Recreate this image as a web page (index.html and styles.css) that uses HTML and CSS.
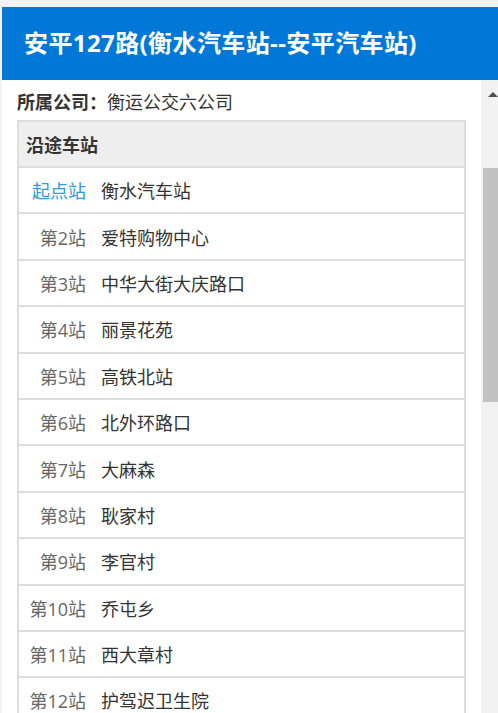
FILE: index.html
```html
<!DOCTYPE html>
<html lang="zh-CN">
<head>
<meta charset="utf-8">
<title>安平127路</title>
<link rel="stylesheet" href="styles.css">
</head>
<body>
<header class="topbar">
  <h1 class="title">安平127路(衡水汽车站--安平汽车站)</h1>
</header>
<div class="main">
  <div class="panel">
    <p class="company"><b class="company-label">所属公司：</b>衡运公交六公司</p>
    <div class="stations">
      <div class="stations-head">沿途车站</div>
      <div class="row"><span class="num start">起点站</span><span class="name">衡水汽车站</span></div>
      <div class="row"><span class="num">第2站</span><span class="name">爱特购物中心</span></div>
      <div class="row"><span class="num">第3站</span><span class="name">中华大街大庆路口</span></div>
      <div class="row"><span class="num">第4站</span><span class="name">丽景花苑</span></div>
      <div class="row"><span class="num">第5站</span><span class="name">高铁北站</span></div>
      <div class="row"><span class="num">第6站</span><span class="name">北外环路口</span></div>
      <div class="row"><span class="num">第7站</span><span class="name">大麻森</span></div>
      <div class="row"><span class="num">第8站</span><span class="name">耿家村</span></div>
      <div class="row"><span class="num">第9站</span><span class="name">李官村</span></div>
      <div class="row"><span class="num">第10站</span><span class="name">乔屯乡</span></div>
      <div class="row"><span class="num">第11站</span><span class="name">西大章村</span></div>
      <div class="row"><span class="num">第12站</span><span class="name">护驾迟卫生院</span></div>
    </div>
  </div>
  <div class="scrollbar">
    <div class="arrow-box"><span class="arrow-up"></span></div>
    <div class="thumb"></div>
  </div>
</div>
</body>
</html>
```
FILE: styles.css
```css
html, body {
  margin: 0;
  padding: 0;
}
body {
  background: #f2f2f2;
  height: 713px;
  overflow: hidden;
  padding: 7px 0 0 2px;
  box-sizing: border-box;
  display: flex;
  flex-direction: column;
  font-family: "Open Sans", "Noto Sans CJK SC", sans-serif;
  color: #333;
}
.topbar {
  background: #0078d7;
  height: 73px;
  flex: none;
  display: flex;
  align-items: center;
  padding-left: 22px;
}
.title {
  margin: 0;
  color: #fff;
  font-size: 24px;
  font-weight: bold;
  line-height: 30px;
  padding-bottom: 2px;
  letter-spacing: 0.4px;
}
.main {
  flex: 1;
  display: flex;
  min-height: 0;
}
.panel {
  flex: 1;
  background: #fff;
  overflow: hidden;
  padding: 0 15px;
}
.company {
  margin: 0;
  padding-top: 10px;
  font-size: 18px;
  line-height: 24px;
  color: #333;
  height: 30px;
}
.company-label {
  font-weight: bold;
}
.stations {
  border: 2px solid #ddd;
  border-bottom: none;
}
.stations-head {
  background: #eee;
  height: 44px;
  display: flex;
  align-items: center;
  padding-left: 7px;
  font-size: 18px;
  font-weight: bold;
  color: #333;
  border-bottom: 2px solid #ddd;
}
.row {
  height: 44.4px;
  display: flex;
  align-items: center;
  gap: 15px;
  font-size: 18px;
  border-bottom: 2px solid #ddd;
}
.num {
  width: 67px;
  text-align: right;
  color: #666;
  flex: none;
}
.num.start {
  color: #2a9be6;
}
.name {
  color: #333;
}
.scrollbar {
  width: 17px;
  flex: none;
  background: #f1f1f1;
  display: flex;
  flex-direction: column;
}
.arrow-box {
  height: 88px;
  flex: none;
  padding: 12px 0 0 7px;
  box-sizing: border-box;
}
.arrow-up {
  display: block;
  width: 0;
  height: 0;
  border-left: 5px solid transparent;
  border-right: 5px solid transparent;
  border-bottom: 5px solid #505050;
}
.thumb {
  margin-left: 2px;
  height: 234px;
  background: #c1c1c1;
}
```
